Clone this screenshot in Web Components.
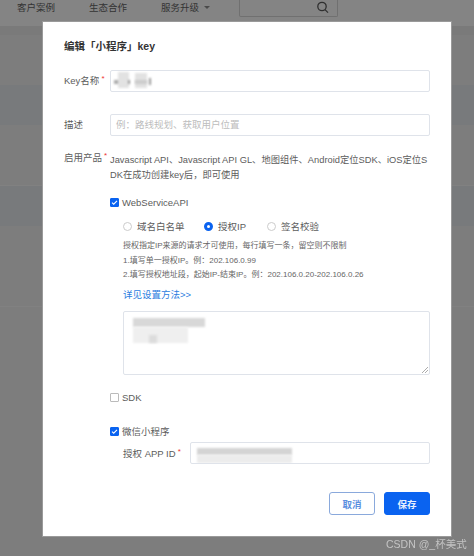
<!DOCTYPE html>
<html lang="zh">
<head>
<meta charset="utf-8">
<title>编辑key</title>
<style>
html, body { margin: 0; height: 100%; }
body {
    font-family: "Liberation Sans", "Noto Sans CJK SC", sans-serif;
    color: #555;
    overflow: hidden;
}
</style>
</head>
<body>
<site-page>
    <top-nav slot="nav"></top-nav>
    <key-dialog heading="编辑「小程序」key">
        <form-row label="Key名称" required gap="22">
            <text-box blur="name"></text-box>
        </form-row>
        <form-row label="描述" gap="11">
            <text-box placeholder="例：路线规划、获取用户位置"></text-box>
        </form-row>
        <form-row label="启用产品" required gap="0">
            <product-panel></product-panel>
        </form-row>
    </key-dialog>
</site-page>

<script>
class SitePage extends HTMLElement {
    constructor() {
        super();
        this.attachShadow({ mode: "open" }).innerHTML = `
        <style>
        :host { display: block; position: relative; width: 100%; height: 556px; background: #7d7d7d; overflow: hidden; }
        .band { background: #7a7a7a; }
        .cool { background: #787a7c; }
        .line { border-bottom: 1px solid #818181; }
        .overlay { position: absolute; inset: 0; }
        </style>
        <slot name="nav"></slot>
        <div class="band" style="height:9px"></div>
        <div style="height:50px"></div>
        <div class="cool" style="height:40px"></div>
        <div class="line" style="height:60px"></div>
        <div class="cool" style="height:40px"></div>
        <div class="line" style="height:80px"></div>
        <div class="overlay"><slot></slot></div>`;
    }
}

class TopNav extends HTMLElement {
    constructor() {
        super();
        this.attachShadow({ mode: "open" }).innerHTML = `
        <style>
        :host { display: flex; align-items: flex-start; height: 26px; background: #848484; color: #333; font-size: 9.5px; padding-left: 17px; box-sizing: border-box; }
        span { width: 38px; margin-top: 2px; line-height: 12px; margin-right: 34px; white-space: nowrap; }
        .caret { width: 0; height: 0; border: 3px solid transparent; border-top-color: #4a4a4a; margin: 6px 0 0 -29px; }
        .search { width: 99px; height: 17px; margin-left: 29px; border: 1px solid #707070; border-top: 0; border-radius: 0 0 2px 2px; box-sizing: border-box; display: flex; justify-content: flex-end; padding-right: 8px; }
        svg { width: 13px; height: 13px; margin-top: 1px; }
        </style>
        <span>客户案例</span><span>生态合作</span><span>服务升级</span><i class="caret"></i>
        <div class="search"><svg viewBox="0 0 13 13" fill="none" stroke="#2f2f2f" stroke-width="1.3"><circle cx="6" cy="5.5" r="4.2"/><path d="M9 8.6l3 3"/></svg></div>`;
    }
}

class KeyDialog extends HTMLElement {
    constructor() {
        super();
        this.attachShadow({ mode: "open" }).innerHTML = `
        <style>
        :host { display: block; width: 408px; height: 514px; margin: 22px 0 0 43px; box-sizing: border-box; background: #fff; padding: 17px 21px 0; box-shadow: 0 0 0 1px #9a9a9a; position: relative; }
        h2 { margin: 0 0 17px; font-size: 10.5px; line-height: 14px; font-weight: 700; color: #333; height: 14px; }
        .foot { position: absolute; right: 21px; bottom: 21px; display: flex; gap: 9px; }
        button { width: 46px; height: 23px; box-sizing: border-box; border-radius: 3px; font: inherit; font-size: 9.5px; font-weight: 700; padding: 0; }
        .cancel { background: #fff; border: 1px solid #8aa9dc; color: #5b8fe0; }
        .save { background: #0a63f0; border: 1px solid #0a63f0; color: #e8f0ff; }
        </style>
        <h2></h2>
        <slot></slot>
        <div class="foot"><button class="cancel">取消</button><button class="save">保存</button></div>`;
        this.shadowRoot.querySelector("h2").textContent = this.getAttribute("heading");
    }
}

class FormRow extends HTMLElement {
    constructor() {
        super();
        this.attachShadow({ mode: "open" }).innerHTML = `
        <style>
        :host { display: flex; align-items: flex-start; font-size: 9.5px; }
        .label { width: 46px; flex: none; line-height: 22px; color: #5c5c5c; white-space: nowrap; }
        b { color: #e33; font-weight: 400; font-size: 8px; line-height: 0; vertical-align: 3px; margin-left: 2px; }
        .body { flex: 1; min-width: 0; }
        </style>
        <div class="label"></div>
        <div class="body"><slot></slot></div>`;
        const label = this.shadowRoot.querySelector(".label");
        label.textContent = this.getAttribute("label");
        if (this.hasAttribute("required")) label.insertAdjacentHTML("beforeend", "<b>*</b>");
        this.style.marginBottom = this.getAttribute("gap") + "px";
    }
}

class TextBox extends HTMLElement {
    constructor() {
        super();
        const tall = this.hasAttribute("tall");
        this.attachShadow({ mode: "open" }).innerHTML = `
        <style>
        :host { display: block; position: relative; }
        .box { height: ${tall ? 64 : 22}px; box-sizing: border-box; border: 1px solid #dfe3ea; border-radius: 2px; background: #fff; padding: 0 5px; font-size: 9.5px; line-height: 20px; color: #bdbdbd; white-space: nowrap; overflow: hidden; position: relative; }
        .smear { position: absolute; filter: blur(1px); }
        .grip { position: absolute; right: 1px; bottom: 1px; width: 7px; height: 7px; }
        </style>
        <div class="box"></div>`;
        const box = this.shadowRoot.querySelector(".box");
        box.textContent = this.getAttribute("placeholder") || "";
        const smears = {
            name: [[3, 9, 8, 4, "#aaa"], [7, 1, 11, 16, "#e2e2e2"], [17, 9, 2, 4, "#999"], [24, 2, 12, 15, "#e2e2e2"], [24, 9, 12, 4, "#ccc"], [38, 7, 2, 7, "#999"]],
            ip: [[9, 6, 72, 9, "#d8d8d8"], [9, 15, 55, 16, "#efefef"], [25, 23, 8, 8, "#dcdcdc"]],
            appid: [[6, 5, 95, 7, "#d4d4d4"], [6, 12, 95, 8, "#ececec"]]
        };
        (smears[this.getAttribute("blur")] || []).forEach(([x, y, w, h, c]) => {
            const s = document.createElement("div");
            s.className = "smear";
            s.style.cssText = `left:${x}px;top:${y}px;width:${w}px;height:${h}px;background:${c}`;
            box.appendChild(s);
        });
        if (tall) box.insertAdjacentHTML("beforeend", `<svg class="grip" viewBox="0 0 7 7" stroke="#888" stroke-width=".7"><path d="M1 7L7 1M4 7l3-3"/></svg>`);
    }
}

class CheckItem extends HTMLElement {
    constructor() {
        super();
        const on = this.hasAttribute("checked");
        this.attachShadow({ mode: "open" }).innerHTML = `
        <style>
        :host { display: flex; align-items: center; gap: 3px; height: 12px; font-size: 9.5px; color: #5c5c5c; }
        .mark { width: 9px; height: 9px; box-sizing: border-box; border-radius: 1px; border: 1px solid ${on ? "#0a63f0" : "#bbb"}; background: ${on ? "#0a63f0" : "#fff"}; display: flex; }
        svg { width: 7px; height: 7px; }
        </style>
        <span class="mark">${on ? `<svg viewBox="0 0 7 7" fill="none" stroke="#fff" stroke-width="1.1"><path d="M1 3.6l1.7 1.6L6 1.8"/></svg>` : ""}</span><slot></slot>`;
    }
}

class RadioItem extends HTMLElement {
    constructor() {
        super();
        const on = this.hasAttribute("checked");
        this.attachShadow({ mode: "open" }).innerHTML = `
        <style>
        :host { display: flex; align-items: center; gap: 5px; font-size: 9.5px; color: #5c5c5c; }
        i { width: 9px; height: 9px; box-sizing: border-box; border-radius: 50%; border: ${on ? "3px solid #0a63f0" : "1px solid #ccc"}; background: #fff; }
        </style>
        <i></i><slot></slot>`;
    }
}

class ProductPanel extends HTMLElement {
    constructor() {
        super();
        this.attachShadow({ mode: "open" }).innerHTML = `
        <style>
        :host { display: block; font-size: 9.5px; color: #5c5c5c; }
        .intro { font-size: 9.3px; line-height: 15px; margin: 6px 0 13px; width: 320px; word-break: break-all; }
        .radios { display: flex; margin: 12px 0 7px 13px; height: 12px; }
        radio-item:nth-child(1) { width: 81px; }
        radio-item:nth-child(2) { width: 63px; }
        .inner { margin-left: 13px; }
        .tip { font-size: 8px; line-height: 14.5px; color: #666; white-space: nowrap; }
        a { display: block; color: #2b7de0; line-height: 12px; margin: 6.5px 0 10px; }
        .gap { height: 16px; }
        .sub { display: flex; align-items: center; margin: 5px 0 0 13px; }
        .sub label { width: 67px; flex: none; white-space: nowrap; }
        .sub b { color: #e33; font-weight: 400; font-size: 8px; line-height: 0; vertical-align: 3px; margin-left: 2px; }
        .sub text-box { flex: 1; }
        </style>
        <div class="intro">Javascript API、Javascript API GL、地图组件、Android定位SDK、iOS定位SDK在成功创建key后，即可使用</div>
        <check-item checked>WebServiceAPI</check-item>
        <div class="radios">
            <radio-item>域名白名单</radio-item>
            <radio-item checked>授权IP</radio-item>
            <radio-item>签名校验</radio-item>
        </div>
        <div class="inner">
            <div class="tip">授权指定IP来源的请求才可使用，每行填写一条，留空则不限制</div>
            <div class="tip">1.填写单一授权IP。例：202.106.0.99</div>
            <div class="tip">2.填写授权地址段，起始IP-结束IP。例：202.106.0.20-202.106.0.26</div>
            <a>详见设置方法&gt;&gt;</a>
            <text-box tall blur="ip"></text-box>
        </div>
        <div class="gap"></div>
        <check-item>SDK</check-item>
        <div style="height:22px"></div>
        <check-item checked>微信小程序</check-item>
        <div class="sub"><label>授权 APP ID<b>*</b></label><text-box blur="appid"></text-box></div>`;
    }
}

class Watermark extends HTMLElement {
    constructor() {
        super();
        this.attachShadow({ mode: "open" }).innerHTML = `
        <style>
        :host { position: fixed; left: 386px; top: 537px; font-size: 10.5px; line-height: 14px; color: #c4c4c4; white-space: nowrap; }
        </style>
        CSDN @_杯美式`;
    }
}

customElements.define("site-page", SitePage);
customElements.define("top-nav", TopNav);
customElements.define("key-dialog", KeyDialog);
customElements.define("form-row", FormRow);
customElements.define("text-box", TextBox);
customElements.define("check-item", CheckItem);
customElements.define("radio-item", RadioItem);
customElements.define("product-panel", ProductPanel);
customElements.define("csdn-mark", Watermark);
document.body.appendChild(document.createElement("csdn-mark"));
</script>
</body>
</html>
